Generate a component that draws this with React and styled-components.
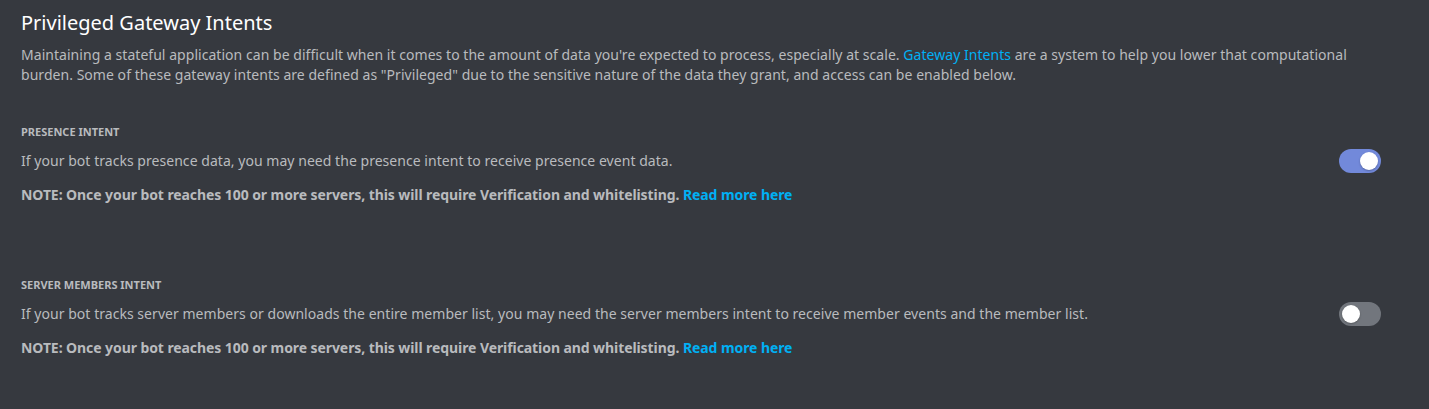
import React, { useState } from "react";
import styled, { createGlobalStyle } from "styled-components";

const Global = createGlobalStyle`
  html, body { margin: 0; padding: 0; background: #36393f; }
  body { font-family: "Noto Sans", "Open Sans", sans-serif; }
`;

const Page = styled.div`
  background: #36393f;
  min-height: 409px;
  padding: 10px 48px 0 21px;
  box-sizing: border-box;
`;

const Title = styled.h2`
  margin: 0 0 9px;
  font-size: 20px;
  line-height: 26px;
  font-weight: 400;
  color: #ffffff;
`;

const Description = styled.p`
  margin: 0;
  font-size: 14px;
  line-height: 20px;
  letter-spacing: 0.04px;
  color: #b9bbbe;
`;

const Link = styled.a`
  color: #00b0f4;
  text-decoration: none;
  font-weight: ${(p) => (p.$bold ? 700 : 400)};
`;

const Section = styled.section`
  margin-top: ${(p) => p.$top}px;
`;

const Label = styled.h5`
  margin: 0 0 9px;
  font-size: 11px;
  line-height: 16px;
  font-weight: 700;
  text-transform: uppercase;
  color: #b9bbbe;
`;

const Row = styled.div`
  display: flex;
  align-items: center;
  justify-content: space-between;
  gap: 24px;
`;

const Note = styled.p`
  margin: 12px 0 0;
  font-size: 14px;
  line-height: 20px;
  font-weight: 700;
  letter-spacing: -0.08px;
  color: #b9bbbe;
`;

const Track = styled.button`
  position: relative;
  flex: 0 0 auto;
  width: 42px;
  height: 24px;
  border: none;
  padding: 0;
  border-radius: 12px;
  cursor: pointer;
  background: ${(p) => (p.$on ? "#7289da" : "#72767d")};
`;

const Knob = styled.span`
  position: absolute;
  top: 3px;
  left: ${(p) => (p.$on ? "21px" : "3px")};
  width: 18px;
  height: 18px;
  border-radius: 50%;
  background: #ffffff;
  box-shadow: 0 1px 2px rgba(0, 0, 0, 0.25);
`;

function Toggle({ initial }) {
  const [on, setOn] = useState(initial);
  return (
    <Track $on={on} onClick={() => setOn(!on)} aria-pressed={on}>
      <Knob $on={on} />
    </Track>
  );
}

function Intent({ label, text, on, top }) {
  return (
    <Section $top={top}>
      <Label>{label}</Label>
      <Row>
        <Description>{text}</Description>
        <Toggle initial={on} />
      </Row>
      <Note>
        NOTE: Once your bot reaches 100 or more servers, this will require Verification and whitelisting.{" "}
        <Link $bold href="#">Read more here</Link>
      </Note>
    </Section>
  );
}

export default function App() {
  return (
    <>
      <Global />
      <Page>
        <Title>Privileged Gateway Intents</Title>
        <Description>
          Maintaining a stateful application can be difficult when it comes to the amount of data you're expected to
          process, especially at scale. <Link href="#">Gateway Intents</Link> are a system to help you lower that
          computational burden. Some of these gateway intents are defined as "Privileged" due to the sensitive nature of
          the data they grant, and access can be enabled below.
        </Description>
        <Intent
          top={39}
          label="Presence Intent"
          on
          text="If your bot tracks presence data, you may need the presence intent to receive presence event data."
        />
        <Intent
          top={72}
          label="Server Members Intent"
          on={false}
          text="If your bot tracks server members or downloads the entire member list, you may need the server members intent to receive member events and the member list."
        />
      </Page>
    </>
  );
}
